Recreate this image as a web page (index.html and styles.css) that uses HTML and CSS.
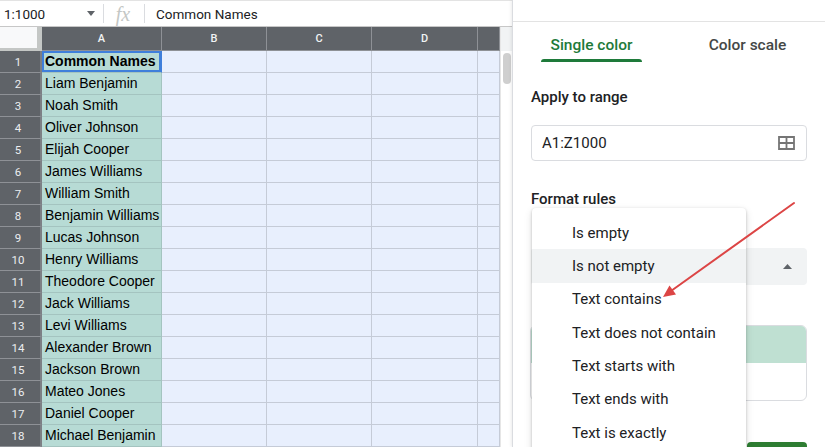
FILE: index.html
```html
<!DOCTYPE html>
<html>
<head>
<meta charset="utf-8">
<link rel="stylesheet" href="styles.css">
</head>
<body>
<div class="app">
  <div class="sheet">
    <div class="fbar">
      <div class="namebox"><span>1:1000</span><span class="caret"><svg width="8" height="5" viewBox="0 0 8 5"><path d="M0 0h8L4 5z" fill="#5f6368"/></svg></span></div>
      <div class="sep"></div>
      <div class="fx">fx</div>
      <div class="sep"></div>
      <div class="ftext">Common Names</div>
    </div>
    <div class="gridwrap">
      <div class="grid">
        <div class="corner"></div>
        <div class="ch">A</div><div class="ch">B</div><div class="ch">C</div><div class="ch">D</div><div class="ch"></div>

        <div class="rh">1</div><div class="c a sel"><b>Common Names</b></div><div class="c"></div><div class="c"></div><div class="c"></div><div class="c"></div>
        <div class="rh">2</div><div class="c a">Liam Benjamin</div><div class="c"></div><div class="c"></div><div class="c"></div><div class="c"></div>
        <div class="rh">3</div><div class="c a">Noah Smith</div><div class="c"></div><div class="c"></div><div class="c"></div><div class="c"></div>
        <div class="rh">4</div><div class="c a">Oliver Johnson</div><div class="c"></div><div class="c"></div><div class="c"></div><div class="c"></div>
        <div class="rh">5</div><div class="c a">Elijah Cooper</div><div class="c"></div><div class="c"></div><div class="c"></div><div class="c"></div>
        <div class="rh">6</div><div class="c a">James Williams</div><div class="c"></div><div class="c"></div><div class="c"></div><div class="c"></div>
        <div class="rh">7</div><div class="c a">William Smith</div><div class="c"></div><div class="c"></div><div class="c"></div><div class="c"></div>
        <div class="rh">8</div><div class="c a">Benjamin Williams</div><div class="c"></div><div class="c"></div><div class="c"></div><div class="c"></div>
        <div class="rh">9</div><div class="c a">Lucas Johnson</div><div class="c"></div><div class="c"></div><div class="c"></div><div class="c"></div>
        <div class="rh">10</div><div class="c a">Henry Williams</div><div class="c"></div><div class="c"></div><div class="c"></div><div class="c"></div>
        <div class="rh">11</div><div class="c a">Theodore Cooper</div><div class="c"></div><div class="c"></div><div class="c"></div><div class="c"></div>
        <div class="rh">12</div><div class="c a">Jack Williams</div><div class="c"></div><div class="c"></div><div class="c"></div><div class="c"></div>
        <div class="rh">13</div><div class="c a">Levi Williams</div><div class="c"></div><div class="c"></div><div class="c"></div><div class="c"></div>
        <div class="rh">14</div><div class="c a">Alexander Brown</div><div class="c"></div><div class="c"></div><div class="c"></div><div class="c"></div>
        <div class="rh">15</div><div class="c a">Jackson Brown</div><div class="c"></div><div class="c"></div><div class="c"></div><div class="c"></div>
        <div class="rh">16</div><div class="c a">Mateo Jones</div><div class="c"></div><div class="c"></div><div class="c"></div><div class="c"></div>
        <div class="rh">17</div><div class="c a">Daniel Cooper</div><div class="c"></div><div class="c"></div><div class="c"></div><div class="c"></div>
        <div class="rh">18</div><div class="c a">Michael Benjamin</div><div class="c"></div><div class="c"></div><div class="c"></div><div class="c"></div>
      </div>
      <div class="vscroll"><div class="vhead"></div><div class="thumb"></div></div>
    </div>
  </div>

  <div class="panel">
    <div class="ptop"></div>
    <div class="tabs">
      <div class="tab active">Single color</div>
      <div class="tab">Color scale</div>
    </div>
    <div class="pbody">
      <div class="label l1">Apply to range</div>
      <div class="range">
        <span>A1:Z1000</span>
        <svg width="17" height="14" viewBox="0 0 17 14"><path d="M1 1h15v12H1z M8.5 1v12 M1 7h15" fill="none" stroke="#757575" stroke-width="1.8"/></svg>
      </div>
      <div class="label l2">Format rules</div>
      <div class="select">
        <svg width="9" height="5" viewBox="0 0 9 5"><path d="M0 5h9L4.5 0z" fill="#5f6368"/></svg>
      </div>
      <div class="rulebox"><div class="preview"></div></div>
      <div class="btnrow"><div class="done"></div></div>
    </div>
    <div class="menu">
      <div class="item">Is empty</div>
      <div class="item hl">Is not empty</div>
      <div class="item">Text contains</div>
      <div class="item">Text does not contain</div>
      <div class="item">Text starts with</div>
      <div class="item">Text ends with</div>
      <div class="item">Text is exactly</div>
    </div>
  </div>

  <svg class="arrow" width="825" height="447" viewBox="0 0 825 447">
    <line x1="794" y1="203" x2="671" y2="291" stroke="#dc4545" stroke-width="2" stroke-linecap="round"/>
    <polygon points="663,297 676,294.5 669.5,285.5" fill="#dc4545"/>
  </svg>
</div>
</body>
</html>
```

FILE: styles.css
```css
* { box-sizing: border-box; }
html, body { margin: 0; padding: 0; }
body {
  width: 825px;
  height: 447px;
  overflow: hidden;
  background: #fff;
  font-family: Roboto, "Liberation Sans", Arial, sans-serif;
  color: #202124;
}
.app {
  position: relative;
  display: flex;
  width: 825px;
  height: 447px;
  overflow: hidden;
}

/* ---------- sheet ---------- */
.sheet {
  width: 512px;
  flex: none;
  display: flex;
  flex-direction: column;
}
.fbar {
  height: 27px;
  flex: none;
  display: flex;
  align-items: center;
  border-top: 1px solid #e3e3e3;
  border-bottom: 1px solid #c7c7c7;
  font-size: 13.5px;
  color: #202124;
}
.namebox {
  width: 103px;
  padding-left: 4px;
  display: flex;
  align-items: center;
  justify-content: space-between;
  padding-right: 8px;
}
.caret { display: flex; align-items: center; }
.sep {
  width: 1px;
  height: 19px;
  background: #dadce0;
}
.fx {
  width: 40px;
  text-align: center;
  font-family: "Liberation Serif", "DejaVu Serif", serif;
  font-style: italic;
  font-size: 20px;
  color: #c4c7c5;
  line-height: 20px;
  padding-right: 2px;
}
.ftext { padding-left: 11px; }

.gridwrap {
  display: flex;
  flex: 1;
}
.grid {
  width: 500px;
  display: grid;
  grid-template-columns: 42px 120px 105px 105px 106px 22px;
  grid-template-rows: 24px;
  grid-auto-rows: 22px;
  font-family: "Liberation Sans", Arial, sans-serif;
  font-size: 14px;
}
.corner {
  background: #f8f9fa;
  border-right: 5px solid #c4c7c5;
  border-bottom: 3px solid #c4c7c5;
}
.ch {
  background: #5f6368;
  color: #f1f3f4;
  font-family: Roboto, sans-serif;
  font-size: 11px;
  font-weight: 500;
  display: flex;
  align-items: center;
  justify-content: center;
  border-right: 1px solid #8e9196;
  border-bottom: 1px solid #8e9196;
}
.rh {
  background: #5f6368;
  color: #eceef0;
  font-family: Roboto, sans-serif;
  font-size: 11.5px;
  display: flex;
  align-items: center;
  justify-content: center;
  padding-right: 4px;
  border-bottom: 1px solid #8e9196;
  border-right: 2px solid #7d8085;
}
.c {
  background: #e8effd;
  border-right: 1px solid #c5cbd7;
  border-bottom: 1px solid #c5cbd7;
  line-height: 21px;
  padding-left: 3px;
  white-space: nowrap;
  overflow: visible;
  color: #000;
}
.c.a {
  background: #b7dbd5;
  border-right-color: #a4c4c0;
  border-bottom-color: #a4c4c0;
}
.c.sel {
  box-shadow: inset 0 0 0 2px #3f7fdb;
  border-right-color: #3f7fdb;
}
.vscroll {
  width: 12px;
  background: #fff;
  border-left: 1px solid #e6e6e6;
  display: flex;
  flex-direction: column;
  align-items: center;
}
.vhead {
  height: 24px;
  width: 100%;
  background: #f1f3f4;
}
.thumb {
  margin-top: 2px;
  width: 8px;
  height: 31px;
  border-radius: 4px;
  background: #cfcfcf;
}

/* ---------- panel ---------- */
.panel {
  position: relative;
  flex: 1;
  border-left: 1px solid #dadce0;
  box-shadow: -1px 0 3px rgba(0,0,0,0.08);
  background: #fff;
}
.ptop {
  height: 22px;
  border-bottom: 1px solid #e3e3e3;
}
.tabs {
  display: flex;
  padding-left: 28px;
  gap: 55px;
  height: 40px;
}
.tab {
  width: 101px;
  text-align: center;
  font-size: 15.5px;
  font-weight: 500;
  color: #444746;
  padding-top: 13px;
  line-height: 20px;
  position: relative;
  white-space: nowrap;
}
.tab.active { color: #1e7a3a; }
.tab.active::after {
  content: "";
  position: absolute;
  left: 0;
  right: 0;
  bottom: 0;
  height: 3px;
  border-radius: 3px 3px 0 0;
  background: #1e7a3a;
}
.pbody {
  padding: 0 18px 0 18px;
}
.label {
  font-size: 15px;
  font-weight: 500;
  line-height: 20px;
  color: #202124;
}
.l1 { margin-top: 25px; }
.l2 { margin-top: 28px; }
.range {
  margin-top: 18px;
  height: 36px;
  border: 1px solid #dadce0;
  border-radius: 4px;
  display: flex;
  align-items: center;
  justify-content: space-between;
  padding: 0 11px 0 10px;
  font-size: 15px;
  color: #202124;
}
.select {
  margin-top: 39px;
  height: 37px;
  background: #f1f3f4;
  border-radius: 4px;
  display: flex;
  align-items: center;
  justify-content: flex-end;
  padding-right: 15px;
}
.rulebox {
  margin-top: 40px;
  margin-left: -1px;
  height: 76px;
  border: 1px solid #dadce0;
  border-radius: 6px;
  overflow: hidden;
}
.preview {
  height: 37px;
  background: #bfe0d2;
}
.btnrow {
  display: flex;
  justify-content: flex-end;
  margin-top: 41px;
}
.done {
  width: 60px;
  height: 36px;
  background: #2e7d32;
  border-radius: 4px;
}

/* ---------- dropdown menu ---------- */
.menu {
  position: absolute;
  left: 19px;
  top: 208px;
  width: 214px;
  height: 260px;
  padding-top: 8px;
  background: #fff;
  border-radius: 4px;
  box-shadow: 0 1px 3px rgba(0,0,0,0.22), 0 3px 8px rgba(0,0,0,0.12);
}
.item {
  height: 33.33px;
  display: flex;
  align-items: center;
  padding-left: 40px;
  font-size: 15px;
  color: #202124;
  white-space: nowrap;
}
.item.hl { background: #f1f3f4; }

.arrow {
  position: absolute;
  left: 0;
  top: 0;
  pointer-events: none;
}
```
